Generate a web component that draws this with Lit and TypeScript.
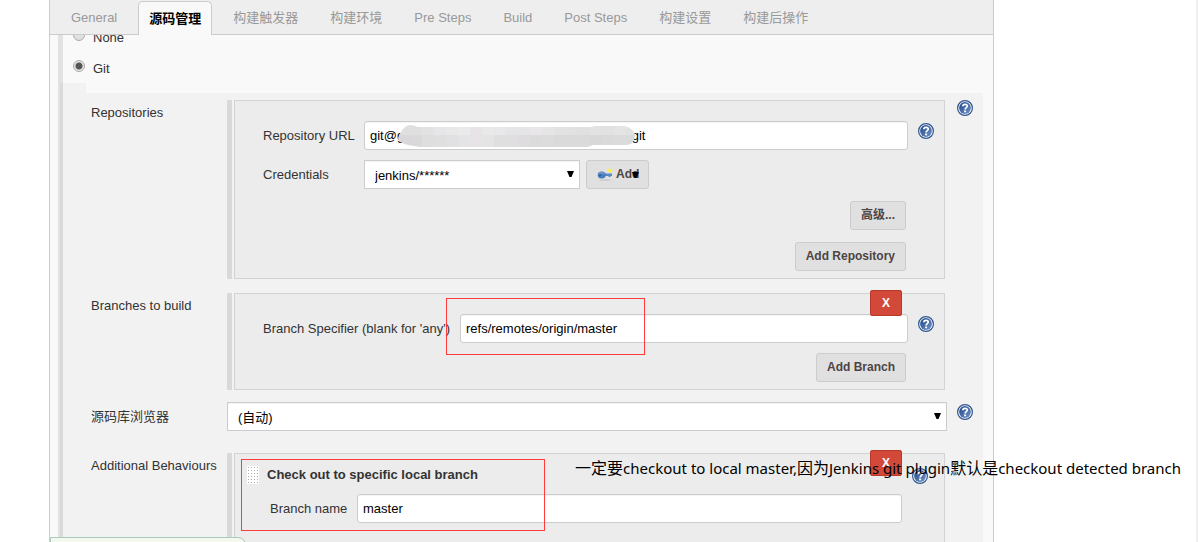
import { LitElement, html, svg, css } from "lit";
import { customElement, property } from "lit/decorators.js";

@customElement("help-button")
class HelpButton extends LitElement {
  @property() topic = "";
  static styles = css`
    :host { display: block; width: 16px; height: 16px; }
    .help { display: block; width: 16px; height: 16px; padding: 0; border: 0; background: none; cursor: pointer; }
    .icon { display: block; }
  `;
  render() {
    return html`<button class="help" type="button" aria-label="Help for feature: ${this.topic}">
      <svg class="icon" width="16" height="16" viewBox="0 0 16 16" aria-hidden="true">
        <defs><linearGradient id="g" x1="0" y1="0" x2="1" y2="1"><stop offset="0" stop-color="#1f4787"/><stop offset="1" stop-color="#7194c8"/></linearGradient></defs>
        <circle cx="8" cy="8" r="7.4" fill="#f4f7fb" stroke="#2f568f" stroke-width="1.2"/>
        <circle cx="8" cy="8" r="5.9" fill="url(#g)"/>
        <path d="M5.8 6.3C5.8 3.7 10.3 3.6 10.3 6.1C10.3 7.6 8.1 7.7 8.1 9.5" fill="none" stroke="#fff" stroke-width="1.7"/>
        <rect x="7.1" y="10.5" width="2" height="1.8" fill="#fff"/>
      </svg>
    </button>`;
  }
}

const tabs = ["General", "源码管理", "构建触发器", "构建环境", "Pre Steps", "Build", "Post Steps", "构建设置", "构建后操作"];
const remoteUrl = "git@g" + "\u00a0".repeat(63) + "git";
const maskTop = ["#e0dfe0", "#e0dfe0", "#e2e2e3", "#e6e5e7", "#e8e8e9", "#eaeaeb", "#e7e3e7", "#e9e9ea", "#e8e7e9", "#e5e5e6", "#e5e4e6", "#e8e6e8", "#e5e5e6", "#e2e2e2", "#e1e1e1", "#e0e0e0", "#e2e2e2", "#e1e1e1", "#e4e4e4", "#e2e2e2"];
const maskBottom = ["#d9d7d9", "#dad8da", "#dfdedf", "#dfdfe0", "#e1e0e2", "#e4e4e5", "#e7e3e7", "#e4e4e5", "#e0dfe0", "#dfdfe0", "#dedcde", "#dcdbdc", "#dddcdc", "#dbdadb", "#dbdadb", "#dbdadb", "#d9d8d9", "#dadada", "#dbdbdb", "#dadada"];

const arrow = html`<svg class="arrow" width="7" height="6" viewBox="0 0 7 6" aria-hidden="true"><path d="M0 0H7L4.5 6H2.5Z" fill="#000"/></svg>`;

@customElement("app-root")
class AppRoot extends LitElement {
  static styles = css`
    :host {
      display: block; position: relative; height: 100vh; overflow: hidden; background: #fff;
      border-right: 2px solid #f0f0f0; box-sizing: border-box;
      font-family: "Liberation Sans", "Noto Sans CJK SC", sans-serif; font-size: 13px; line-height: 16px; color: #333;
    }
    * { box-sizing: border-box; }
    button, input, select { font: inherit; }
    .panel {
      display: flex; flex-direction: column; height: 100%; margin: 0 202px 0 49px;
      border: 1px solid #ccc; border-width: 0 1px; background: #f9f9f9;
    }
    .tabs {
      position: relative; z-index: 1; flex: none; display: flex; align-items: flex-end; gap: 10px; height: 35px;
      padding-left: 10px; background: #eee; border-bottom: 1px solid #ccc;
    }
    .tab {
      height: 34px; padding: 0 10px; border: 1px solid transparent; border-bottom: 0; border-radius: 5px 5px 0 0;
      background: none; color: #999; white-space: nowrap;
    }
    .tab.active { margin-bottom: -1px; background: #f9f9f9; border-color: #ccc; color: #000; font-weight: bold; }
    .content { flex: 1; min-height: 0; overflow: hidden; padding: 0 10px 0 8px; }
    .scm { min-height: 100%; display: flex; flex-direction: column; gap: 1px; margin-top: -13px; border-left: 5px solid #e2e2e2; }
    .choice { display: flex; align-items: center; height: 30px; padding-left: 10px; }
    .choice label { padding-top: 2px; }
    .radio {
      appearance: none; width: 12px; height: 12px; margin: 0 8px 4px 0; border: 1px solid #aaa; border-radius: 50%;
      background: linear-gradient(#e8e8e8, #ddd);
    }
    .radio:checked { background: radial-gradient(circle, #555 0 3px, #e6e6e6 4px); }
    .git {
      flex: 1; display: flex; flex-direction: column; margin: -1px 0 0 -3px; padding: 17px 0 0 28px;
      border-left: 3px solid #dadada; background: linear-gradient(#f9f9f9, #f9f9f9) 23px 0 / 100% 10px no-repeat #f2f2f2;
    }
    .row { display: grid; grid-template-columns: 136px minmax(0, 1fr) 36px; align-items: start; margin-bottom: 14px; }
    .row.browser { margin: -2px 0 22px; }
    .row.last { margin: 0; }
    .caption { padding-top: 5px; }
    .browser .caption { padding-top: 7px; }
    .row > help-button { margin-left: 10px; }
    .browser > help-button { margin-top: 2px; }
    .repeat { margin-right: 2px; padding-left: 2px; border-left: 5px solid #d9d9d9; }
    .box { position: relative; display: flex; flex-direction: column; border: 1px solid #d3d3d3; background: #ececec; padding: 20px 10px 7px 28px; }
    .box.behaviour { padding: 12px 16px 40px 12px; }
    .field { display: grid; grid-template-columns: 101px minmax(0, 1fr) 16px; column-gap: 0; align-items: center; margin-bottom: 10px; }
    .field.wide { grid-template-columns: 197px minmax(0, 1fr) 16px; }
    .field.named { grid-template-columns: 87px minmax(0, 1fr); margin: 10px 26px 0 23px; }
    .field > help-button { align-self: start; margin-top: 2px; }
    .entry { position: relative; margin-right: 10px; }
    .named .entry { margin-right: 0; }
    .text {
      display: block; width: 100%; height: 29px; padding: 0 5px; border: 1px solid #ccc; border-radius: 3px;
      background: #fff; color: #000; box-shadow: inset 0 1px 1px #0000000d;
    }
    .mask { position: absolute; left: 34px; top: 4px; }
    .line { display: flex; gap: 6px; }
    .drop { position: relative; display: block; }
    .credentials { width: 216px; }
    .select {
      appearance: none; display: block; width: 100%; height: 29px; padding: 2px 20px 0 10px; border: 1px solid #ccc;
      border-radius: 0; background: #fff; color: #000; box-shadow: inset 0 1px 1px #0000000d;
    }
    .arrow { position: absolute; right: 6px; top: 11px; pointer-events: none; }
    .button {
      display: inline-flex; align-items: center; justify-content: center; height: 29px; padding: 0 10px 2px; border: 1px solid #ccc;
      border-radius: 3px; background: #e0e0e0; color: #4d4545; font-size: 12px; font-weight: bold; white-space: nowrap;
    }
    .add { position: relative; gap: 3px; padding-right: 6px; }
    .add .arrow { right: 9px; top: 11px; }
    .actions { display: flex; flex-direction: column; align-items: flex-end; gap: 12px; margin-right: 28px; }
    .actions.more { margin-top: 2px; }
    .delete {
      position: absolute; right: 42px; top: -4px; width: 32px; height: 26px; padding: 0; border: 1px solid #b83a2b;
      border-radius: 2px; background: #d24939; color: #fff; font-size: 12px; font-weight: bold;
    }
    .heading { display: flex; align-items: center; gap: 8px; height: 18px; }
    .grip { width: 12px; height: 18px; background: radial-gradient(circle, #aaa 0 1px, #fff 1px) 0 0 / 3px 3px; }
    .title { font-weight: bold; font-size: 13px; margin: 0; }
    .heading help-button { margin: 2px 0 0 auto; }
    .outline { position: absolute; border: 1px solid #ff3b3b; pointer-events: none; }
    .around-branch { left: -14px; top: -16px; width: 199px; height: 57px; }
    .around-behaviour { left: 6px; top: 5px; width: 304px; height: 72px; }
    .note {
      position: absolute; right: 15px; top: 456px; z-index: 2; margin: 0; color: #000; white-space: nowrap;
      font-family: "Noto Sans", "Noto Sans CJK SC", sans-serif; font-size: 15px; line-height: 24px;
    }
    .han { font-size: 16px; }
    .status { position: absolute; left: 50px; bottom: -20px; width: 196px; height: 25px; border: 1px solid #a9cbb9; border-radius: 0 8px 0 0; background: #f4f8ef; }
  `;

  render() {
    return html`
      <main class="panel">
        <nav class="tabs">
          ${tabs.map((t, i) => html`<button type="button" class="tab ${i === 1 ? "active" : ""}">${t}</button>`)}
        </nav>
        <div class="content">
          <div class="scm">
            <div class="choice"><input class="radio" type="radio" name="scm" id="none" /><label for="none">None</label></div>
            <div class="choice"><input class="radio" type="radio" name="scm" id="git" checked /><label for="git">Git</label></div>
            <section class="git">
              <div class="row">
                <div class="caption">Repositories</div>
                <div class="repeat"><div class="box">
                  <div class="field">
                    <label for="url">Repository URL</label>
                    <div class="entry">
                      <input class="text" id="url" .value=${remoteUrl} />
                      <svg class="mask" width="237" height="22" viewBox="0 0 237 22" aria-hidden="true">
                        <clipPath id="blob"><path d="M0 13Q5 1 11 0Q16 0 20 2H192L198 1H227Q237 4 237 11Q236 20 228 20H195L190 22H22L10 20Q1 18 0 13Z"/></clipPath>
                        <g clip-path="url(#blob)">
                          ${maskTop.map((c, i) => svg`<rect x=${i * 12} y="0" width="12" height="11" fill=${c} /><rect x=${i * 12} y="10" width="12" height="12" fill=${maskBottom[i]} />`)}
                        </g>
                      </svg>
                    </div>
                    <help-button topic="Repository URL"></help-button>
                  </div>
                  <div class="field">
                    <label for="credentials">Credentials</label>
                    <div class="line">
                      <div class="drop credentials"><select class="select" id="credentials"><option>jenkins/******</option></select>${arrow}</div>
                      <button class="button add" type="button">
                        <svg width="16" height="16" viewBox="0 0 16 16" aria-hidden="true">
                          <ellipse cx="8" cy="14" rx="6" ry="1" fill="#cfcfcf"/>
                          <path d="M7 7.5H15V10H13.5V11H11.5V10H7Z" fill="#5b89c5"/>
                          <ellipse cx="4.7" cy="9" rx="4" ry="3.6" fill="#4a7dbe"/>
                          <path d="M2 8Q4 5.5 7 7.5" fill="none" stroke="#8db1dd"/>
                          <circle cx="3" cy="9.3" r="1" fill="#2c5791"/>
                          <path d="M12 2L13 3.2L14.8 2.8L14.4 4.4L15.4 5.6L13.8 6L12.6 7L11.8 5.6L10 5.2L11 4Z" fill="#fcef3c"/>
                        </svg>Add${arrow}
                      </button>
                    </div>
                  </div>
                  <div class="actions more">
                    <button class="button" type="button">高级...</button>
                    <button class="button" type="button">Add Repository</button>
                  </div>
                </div></div>
                <help-button topic="Repositories"></help-button>
              </div>
              <div class="row">
                <div class="caption">Branches to build</div>
                <div class="repeat"><div class="box">
                  <div class="field wide">
                    <label for="branch">Branch Specifier (blank for 'any')</label>
                    <div class="entry">
                      <input class="text" id="branch" value="refs/remotes/origin/master" />
                      <div class="outline around-branch"></div>
                    </div>
                    <help-button topic="Branch Specifier"></help-button>
                  </div>
                  <div class="actions"><button class="button" type="button">Add Branch</button></div>
                  <button class="delete" type="button">X</button>
                </div></div>
              </div>
              <div class="row browser">
                <label class="caption" for="browser">源码库浏览器</label>
                <div class="drop"><select class="select" id="browser"><option>(自动)</option></select>${arrow}</div>
                <help-button topic="源码库浏览器"></help-button>
              </div>
              <div class="row last">
                <div class="caption">Additional Behaviours</div>
                <div class="repeat"><div class="box behaviour">
                  <div class="heading">
                    <span class="grip"></span><h2 class="title">Check out to specific local branch</h2>
                    <help-button topic="Check out to specific local branch"></help-button>
                  </div>
                  <div class="field named">
                    <label for="local">Branch name</label>
                    <div class="entry"><input class="text" id="local" value="master" /></div>
                  </div>
                  <button class="delete" type="button">X</button>
                  <div class="outline around-behaviour"></div>
                </div></div>
              </div>
            </section>
          </div>
        </div>
      </main>
      <p class="note"><span class="han">一定要</span>checkout to local master,<span class="han">因为</span>Jenkins git plugin<span class="han">默认是</span>checkout detected branch</p>
      <div class="status"></div>
    `;
  }
}
